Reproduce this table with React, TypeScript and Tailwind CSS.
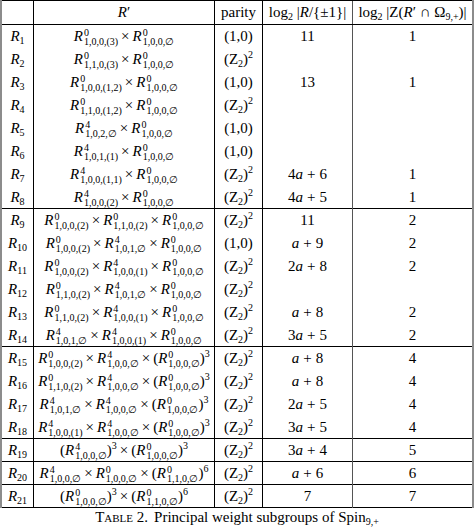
type Term = { sup: string; sub: string; pow?: string }

const t = (s: string): Term => {
  const [sup, sub, pow] = s.split("|")
  return { sup, sub, pow }
}

type Row = {
  n: number
  terms: Term[]
  parity: "10" | "z"
  log?: string
  z?: string
  end?: boolean
}

const rows: Row[] = [
  { n: 1, terms: [t("0|1,0,0,(3)"), t("0|1,0,0,∅")], parity: "10", log: "11", z: "1" },
  { n: 2, terms: [t("0|1,1,0,(3)"), t("0|1,0,0,∅")], parity: "z" },
  { n: 3, terms: [t("0|1,0,0,(1,2)"), t("0|1,0,0,∅")], parity: "10", log: "13", z: "1" },
  { n: 4, terms: [t("0|1,1,0,(1,2)"), t("0|1,0,0,∅")], parity: "z" },
  { n: 5, terms: [t("4|1,0,2,∅"), t("0|1,0,0,∅")], parity: "10" },
  { n: 6, terms: [t("4|1,0,1,(1)"), t("0|1,0,0,∅")], parity: "10" },
  { n: 7, terms: [t("4|1,0,0,(1,1)"), t("0|1,0,0,∅")], parity: "z", log: "4a+6", z: "1" },
  { n: 8, terms: [t("4|1,0,0,(2)"), t("0|1,0,0,∅")], parity: "z", log: "4a+5", z: "1", end: true },
  { n: 9, terms: [t("0|1,0,0,(2)"), t("0|1,1,0,(2)"), t("0|1,0,0,∅")], parity: "z", log: "11", z: "2" },
  { n: 10, terms: [t("0|1,0,0,(2)"), t("4|1,0,1,∅"), t("0|1,0,0,∅")], parity: "10", log: "a+9", z: "2" },
  { n: 11, terms: [t("0|1,0,0,(2)"), t("4|1,0,0,(1)"), t("0|1,0,0,∅")], parity: "z", log: "2a+8", z: "2" },
  { n: 12, terms: [t("0|1,1,0,(2)"), t("4|1,0,1,∅"), t("0|1,0,0,∅")], parity: "z" },
  { n: 13, terms: [t("0|1,1,0,(2)"), t("4|1,0,0,(1)"), t("0|1,0,0,∅")], parity: "z", log: "a+8", z: "2" },
  { n: 14, terms: [t("4|1,0,1,∅"), t("4|1,0,0,(1)"), t("0|1,0,0,∅")], parity: "z", log: "3a+5", z: "2", end: true },
  { n: 15, terms: [t("0|1,0,0,(2)"), t("4|1,0,0,∅"), t("0|1,0,0,∅|3")], parity: "z", log: "a+8", z: "4" },
  { n: 16, terms: [t("0|1,1,0,(2)"), t("4|1,0,0,∅"), t("0|1,0,0,∅|3")], parity: "z", log: "a+8", z: "4" },
  { n: 17, terms: [t("4|1,0,1,∅"), t("4|1,0,0,∅"), t("0|1,0,0,∅|3")], parity: "z", log: "2a+5", z: "4" },
  { n: 18, terms: [t("4|1,0,0,(1)"), t("4|1,0,0,∅"), t("0|1,0,0,∅|3")], parity: "z", log: "3a+5", z: "4", end: true },
  { n: 19, terms: [t("4|1,0,0,∅|3"), t("0|1,0,0,∅|3")], parity: "z", log: "3a+4", z: "5", end: true },
  { n: 20, terms: [t("4|1,0,0,∅"), t("0|1,0,0,∅"), t("0|1,1,0,∅|6")], parity: "z", log: "a+6", z: "6", end: true },
  { n: 21, terms: [t("0|1,0,0,∅|3"), t("0|1,1,0,∅|6")], parity: "z", log: "7", z: "7", end: true },
]

const serif = "font-['Liberation_Serif','DejaVu_Serif',serif]"

// stacked super/subscript, baseline of the block sits on the subscript line
const Scripts = ({ sup, sub }: { sup: string; sub: string }) => (
  <span className="inline-block align-[-4px] text-[10px] leading-[9px] text-left ml-[1px]">
    <span className="block">{sup}</span>
    <span className="block">{sub}</span>
  </span>
)

const Sup = ({ children }: { children: React.ReactNode }) => (
  <span className="inline-block align-[6px] text-[10px] leading-none">{children}</span>
)

const Sub = ({ children }: { children: React.ReactNode }) => (
  <span className="inline-block align-[-3px] text-[10px] leading-none">{children}</span>
)

const TermView = ({ term }: { term: Term }) => {
  const core = (
    <>
      <i>R</i>
      <Scripts sup={term.sup} sub={term.sub} />
    </>
  )
  if (!term.pow) return <span className="whitespace-nowrap">{core}</span>
  return (
    <span className="whitespace-nowrap">
      ({core})<Sup>{term.pow}</Sup>
    </span>
  )
}

const Times = () => <span className="mx-[3px]">×</span>

const Parity = ({ p }: { p: "10" | "z" }) =>
  p === "10" ? (
    <span>(1,0)</span>
  ) : (
    <span>
      (Z<Sub>2</Sub>)<Sup>2</Sup>
    </span>
  )

const LogVal = ({ v }: { v?: string }) => {
  if (!v) return null
  const m = v.match(/^(\d*)a\+(\d+)$/)
  if (!m) return <span>{v}</span>
  return (
    <span>
      {m[1]}
      <i>a</i>
      <span className="mx-[4px]">+</span>
      {m[2]}
    </span>
  )
}

const cols = "grid grid-cols-[32px_181px_48px_90px_119px]"

const App = () => {
  return (
    <div className={`${serif} w-[474px] bg-white text-black text-[15px]`}>
      <div className="border-x-2 border-x-[#8c8c8c]">
        <div className={`${cols} h-[25px] border-y border-black items-center text-center`}>
          <div className="h-full border-r border-black" />
          <div className="h-full flex items-center justify-center border-r border-black">
            <span>
              <i>R</i>′
            </span>
          </div>
          <div className="h-full flex items-center justify-center border-r border-black">parity</div>
          <div className="h-full flex items-center justify-center border-r border-[#555]">
            <span className="whitespace-nowrap">
              log<Sub>2</Sub> |<i>R</i>/{"{"}±1{"}"}|
            </span>
          </div>
          <div className="h-full flex items-center justify-center">
            <span className="whitespace-nowrap">
              log<Sub>2</Sub> |Z(<i>R</i>′ ∩ Ω<Sub>9,+</Sub>)|
            </span>
          </div>
        </div>

        {rows.map((r) => (
          <div
            key={r.n}
            className={`${cols} h-[23px] ${r.end ? "border-b border-black" : ""}`}
          >
            <div className="flex items-center justify-center border-r border-black">
              <span>
                <i>R</i>
                <Sub>{r.n}</Sub>
              </span>
            </div>
            <div className="flex items-center justify-center border-r border-black whitespace-nowrap">
              {r.terms.map((term, i) => (
                <span key={i}>
                  {i > 0 && <Times />}
                  <TermView term={term} />
                </span>
              ))}
            </div>
            <div className="flex items-center justify-center border-r border-black">
              <Parity p={r.parity} />
            </div>
            <div className="flex items-center justify-center border-r border-[#555]">
              <LogVal v={r.log} />
            </div>
            <div className="flex items-center justify-center">{r.z}</div>
          </div>
        ))}
      </div>

      <div className="text-center leading-[18px]">
        <span className="[font-variant:small-caps]">Table 2.</span>
        <span className="ml-[6px]">
          Principal weight subgroups of Spin<Sub>9,+</Sub>
        </span>
      </div>
    </div>
  )
}

export default App
